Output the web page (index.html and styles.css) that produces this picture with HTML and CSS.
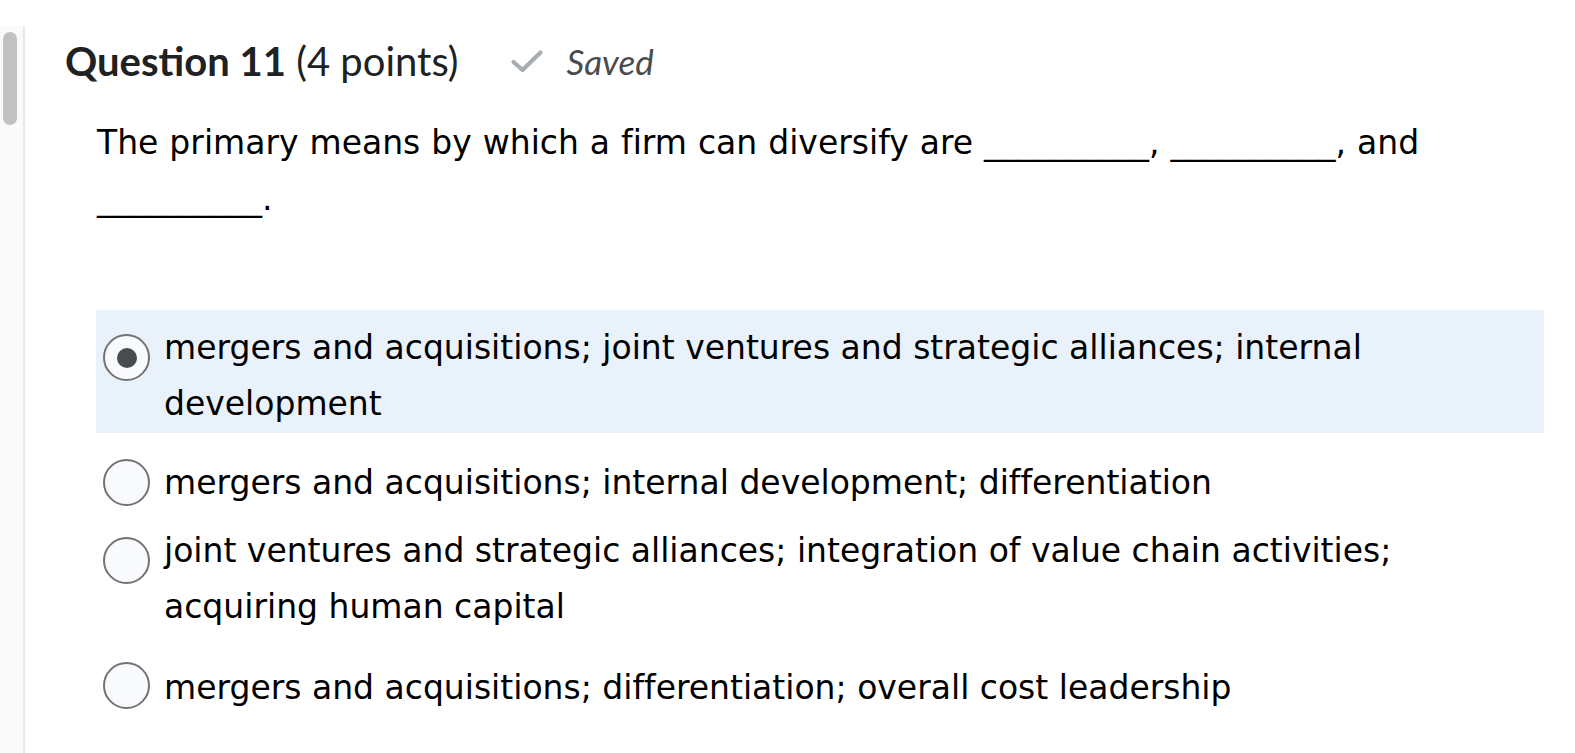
FILE: index.html
```html
<!DOCTYPE html>
<html>
<head>
<meta charset="utf-8">
<link rel="stylesheet" href="styles.css">
</head>
<body>
<div class="rail"><div class="thumb"></div></div>
<main class="main">
  <div class="header">
    <h2 class="title"><span class="qnum">Question 11</span> <span class="pts">(4 points)</span></h2>
    <div class="saved">
      <svg class="check" width="34" height="26" viewBox="0 0 34 26"><path d="M3.5 14 L12.5 22 L30.5 4.5" fill="none" stroke="#a7adb2" stroke-width="4.2" stroke-linecap="round" stroke-linejoin="round"/></svg>
      <span class="saved-text">Saved</span>
    </div>
  </div>
  <p class="question">The primary means by which a firm can diversify are __________, __________, and __________.</p>
  <div class="options">
    <label class="option selected">
      <span class="radio checked"></span>
      <span class="otext">mergers and acquisitions; joint ventures and strategic alliances; internal development</span>
    </label>
    <label class="option single">
      <span class="radio"></span>
      <span class="otext">mergers and acquisitions; internal development; differentiation</span>
    </label>
    <label class="option">
      <span class="radio"></span>
      <span class="otext">joint ventures and strategic alliances; integration of value chain activities; acquiring human capital</span>
    </label>
    <label class="option single last">
      <span class="radio"></span>
      <span class="otext">mergers and acquisitions; differentiation; overall cost leadership</span>
    </label>
  </div>
</main>
</body>
</html>
```
FILE: styles.css
```css
html, body {
  margin: 0;
  padding: 0;
  background: #ffffff;
  height: 100%;
}
body {
  display: flex;
  align-items: stretch;
  overflow: hidden;
}
.rail {
  flex: 0 0 23px;
  margin-top: 26px;
  background: #fafafa;
  border-right: 2px solid #e8e8e8;
  box-sizing: content-box;
}
.thumb {
  width: 14px;
  height: 93px;
  margin: 6px 0 0 3px;
  border-radius: 7px;
  background: #c1c1c1;
}
.main {
  flex: 1;
  padding-left: 40px;
  padding-top: 33px;
}
.header {
  display: flex;
  align-items: center;
  height: 56px;
}
.title {
  margin: 0;
  font-family: Lato, sans-serif;
  font-size: 40px;
  font-weight: 400;
  color: #202122;
  line-height: 56px;
}
.qnum {
  font-weight: 700;
}
.saved {
  display: flex;
  align-items: center;
  margin-left: 51px;
}
.check {
  display: block;
}
.saved-text {
  margin-left: 23px;
  font-family: Lato, sans-serif;
  font-style: italic;
  font-size: 35px;
  color: #494c4e;
}
.question {
  margin: 26px 0 0 32px;
  font-family: "DejaVu Sans", Verdana, sans-serif;
  font-variant-ligatures: none;
  font-size: 33px;
  line-height: 56px;
  word-spacing: 0.5px;
  color: #000;
  width: 1448px;
}
.options {
  margin: 83px 0 0 31px;
  width: 1448px;
}
.option {
  display: flex;
  align-items: flex-start;
  padding: 10px 0 1px;
  font-family: "DejaVu Sans", Verdana, sans-serif;
  font-variant-ligatures: none;
  font-size: 33px;
  line-height: 56px;
  color: #000;
}
.option.selected {
  background: #e9f1fb;
}
.option.single {
  padding: 22px 0 2px;
}
.option.last {
  padding-top: 24px;
}
.radio {
  flex: 0 0 auto;
  width: 43px;
  height: 43px;
  margin: 14px 14px 0 7px;
  border: 2px solid #737373;
  border-radius: 50%;
  background: #f9fafe;
  display: flex;
  align-items: center;
  justify-content: center;
}
.option.single .radio {
  margin-top: 4px;
}
.option.last .radio {
  margin-top: 2px;
}
.radio.checked::after {
  content: "";
  width: 20px;
  height: 20px;
  border-radius: 50%;
  background: #494c4e;
}
.otext {
  flex: 1;
}
```
